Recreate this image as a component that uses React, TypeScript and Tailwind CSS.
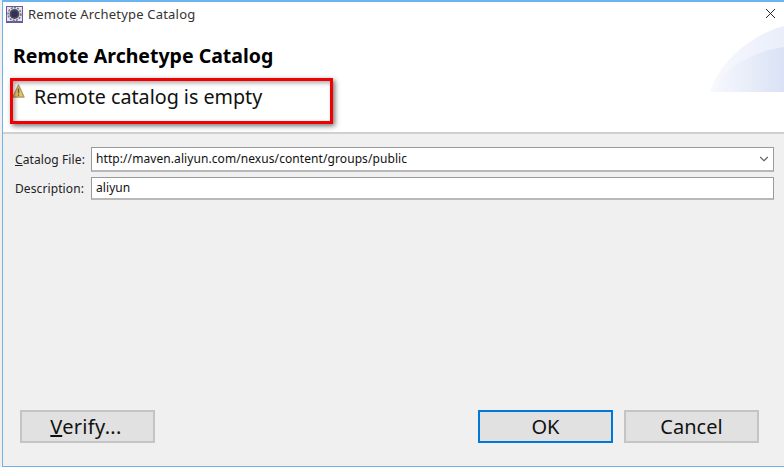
import React from 'react';
import { ChevronDown, X } from 'lucide-react';

const AppIcon = () => (
  <svg width="17" height="17" viewBox="0 0 17 17" className="shrink-0">
    <rect x="0" y="0" width="17" height="17" fill="#6b5a9a" />
    <rect x="1" y="1" width="15" height="14" fill="#e6e4ec" />
    <circle cx="8.5" cy="8" r="6.4" fill="none" stroke="#77757f" strokeWidth="1.6" strokeDasharray="2 1.2" />
    <circle cx="8.5" cy="8" r="5" fill="#4a4868" />
    <circle cx="8.5" cy="8" r="3.2" fill="#34324f" />
  </svg>
);

const WarnIcon = () => (
  <svg width="13" height="15" viewBox="0 0 13 15">
    <path d="M6.5 1 L12 13 H1 Z" fill="#e8c468" stroke="#b59a5e" strokeWidth="1.4" strokeLinejoin="round" />
    <rect x="5.8" y="4.5" width="1.4" height="5" fill="#6a5a3a" />
    <rect x="5.8" y="10.4" width="1.4" height="1.4" fill="#6a5a3a" />
  </svg>
);

const HeaderArt = () => (
  <svg width="74" height="67" viewBox="0 0 74 67" className="absolute right-0 top-[24px]">
    <defs>
      <linearGradient id="arc" x1="0" x2="1" y1="0" y2="0">
        <stop offset="0" stopColor="#f8f9fe" />
        <stop offset="1" stopColor="#e9eefa" />
      </linearGradient>
      <linearGradient id="arc2" x1="0" x2="1" y1="0" y2="0">
        <stop offset="0" stopColor="#f7f8fd" />
        <stop offset="1" stopColor="#d9e2f5" />
      </linearGradient>
    </defs>
    <path d="M0 66 C6 42 36 10 74 0 V66 Z" fill="url(#arc)" />
    <path d="M3 66 C10 44 40 26 74 21 V66 Z" fill="url(#arc2)" />
  </svg>
);

const Btn: React.FC<{ primary?: boolean; className?: string; children: React.ReactNode }> = ({ primary, className, children }) => (
  <button
    type="button"
    className={`h-[33px] w-[135px] bg-[#e1e1e1] text-[20px] leading-none text-[#111] ${
      primary ? 'border-2 border-[#0078d7]' : 'border-2 border-[#c4c4c4]'
    } ${className ?? ''}`}
  >
    {children}
  </button>
);

export default function App() {
  return (
    <div
      className="flex h-[467px] w-[784px] overflow-hidden bg-[#f0f0f0] pl-[2px]"
      style={{ fontFamily: '"Noto Sans", sans-serif' }}
    >
      <div className="relative flex flex-1 flex-col border-t-2 border-b border-l border-[#6db3ec]">
        {/* title bar + banner */}
        <div className="relative h-[130px] shrink-0 bg-white">
          <div className="flex h-[24px] items-center gap-[5px] pl-[3px] pt-[1px]">
            <AppIcon />
            <span className="text-[13px] leading-none tracking-[0.2px] text-[#333]">Remote Archetype Catalog</span>
            <X size={17} strokeWidth={1.4} className="absolute right-[5px] top-[3px] text-[#222]" />
          </div>
          <h1 className="ml-[10px] mt-[16px] text-[19.5px] font-bold leading-[28px] text-black">Remote Archetype Catalog</h1>
          <div className="mt-[13px] flex items-center pl-[9px]">
            <div className="-mt-[12px]">
              <WarnIcon />
            </div>
            <span className="ml-[9px] text-[19.7px] leading-[28px] text-[#111]">Remote catalog is empty</span>
          </div>
          <HeaderArt />
          <div className="absolute left-[7px] top-[76px] h-[46px] w-[323px] border-[3px] border-[#f00000] shadow-[2px_2px_5px_rgba(0,0,0,0.55),inset_2px_2px_4px_rgba(0,0,0,0.35)]" />
        </div>
        <div className="h-[2px] shrink-0 bg-[#d0d0d0]" />

        {/* form */}
        <div className="flex flex-1 flex-col bg-[#f0f0f0] pl-[12px] pr-[10px] pt-[13px]">
          <div className="flex items-center">
            <label className="w-[76px] shrink-0 text-[12px] tracking-[0.1px] text-[#222]">
              <span className="underline">C</span>atalog File:
            </label>
            <div className="flex h-[25px] flex-1 items-center justify-between border border-[#9a9a9a] border-b-2 border-b-[#b8b8b8] bg-white pl-[4px] pr-[2px] text-[12px] tracking-[0.08px] text-[#111]">
              <span>http://maven.aliyun.com/nexus/content/groups/public</span>
              <ChevronDown size={14} className="text-[#666]" />
            </div>
          </div>
          <div className="mt-[5px] flex items-center">
            <label className="w-[76px] shrink-0 text-[12px] tracking-[0.1px] text-[#222]">Description:</label>
            <div className="flex h-[23px] flex-1 items-center border border-[#9a9a9a] border-b-2 border-b-[#b8b8b8] bg-white pl-[4px] text-[12px] tracking-[0.08px] text-[#111]">
              aliyun
            </div>
          </div>

          <div className="mt-auto mb-[23px] flex items-center pl-[5px] pr-[15px]">
            <Btn className="pr-[3px] tracking-[0.3px]">
              <span className="underline">V</span>erify...
            </Btn>
            <div className="ml-auto flex gap-[11px]">
              <Btn primary>OK</Btn>
              <Btn>Cancel</Btn>
            </div>
          </div>
        </div>
      </div>
    </div>
  );
}
